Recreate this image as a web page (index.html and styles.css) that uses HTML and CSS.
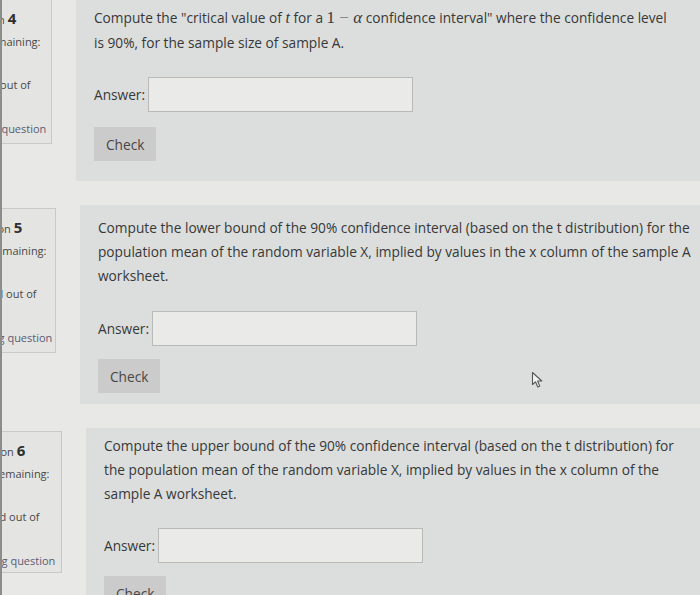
FILE: index.html
```html
<!DOCTYPE html>
<html>
<head>
<meta charset="utf-8">
<title>Quiz</title>
<link rel="stylesheet" href="styles.css">
</head>
<body>
<div class="page">
  <div class="que q4">
    <div class="info">
      <div class="qno">Question <b>4</b></div>
      <div class="line">Tries remaining:</div>
      <div class="line">2</div>
      <div class="line">Marked out of</div>
      <div class="line">1.00</div>
      <div class="line flag"><svg class="flagicon" width="16" height="16" viewBox="0 0 16 16"><path d="M3 2v12M3 2h9l-2 3 2 3H3" fill="none" stroke="#777" stroke-width="1.4"/></svg>Flag question</div>
    </div>
    <div class="content">
      <p class="qtext">Compute the "critical value of <i class="mv">t</i> for a <span class="math">1 <span class="minus">−</span> <i>α</i></span> confidence interval" where the confidence level<br>is 90%, for the sample size of sample A.</p>
      <div class="ans"><span class="label">Answer:</span><span class="input"></span></div>
      <button class="check">Check</button>
    </div>
  </div>

  <div class="que q5">
    <div class="info">
      <div class="qno">Question <b>5</b></div>
      <div class="line">Tries remaining:</div>
      <div class="line">2</div>
      <div class="line">Marked out of</div>
      <div class="line">1.00</div>
      <div class="line flag"><svg class="flagicon" width="16" height="16" viewBox="0 0 16 16"><path d="M3 2v12M3 2h9l-2 3 2 3H3" fill="none" stroke="#777" stroke-width="1.4"/></svg>Flag question</div>
    </div>
    <div class="content">
      <p class="qtext">Compute the lower bound of the 90% confidence interval (based on the t distribution) for the<br>population mean of the random variable X, implied by values in the x column of the sample A<br>worksheet.</p>
      <div class="ans"><span class="label">Answer:</span><span class="input"></span></div>
      <button class="check">Check</button>
    </div>
  </div>

  <div class="que q6">
    <div class="info">
      <div class="qno">Question <b>6</b></div>
      <div class="line">Tries remaining:</div>
      <div class="line">2</div>
      <div class="line">Marked out of</div>
      <div class="line">1.00</div>
      <div class="line flag"><svg class="flagicon" width="16" height="16" viewBox="0 0 16 16"><path d="M3 2v12M3 2h9l-2 3 2 3H3" fill="none" stroke="#777" stroke-width="1.4"/></svg>Flag question</div>
    </div>
    <div class="content">
      <p class="qtext">Compute the upper bound of the 90% confidence interval (based on the t distribution) for<br>the population mean of the random variable X, implied by values in the x column of the<br>sample A worksheet.</p>
      <div class="ans"><span class="label">Answer:</span><span class="input"></span></div>
      <button class="check">Check</button>
    </div>
  </div>
</div>
<svg class="cursor" width="14" height="18" viewBox="0 0 14 18"><path d="M1.5 1.5 L1.5 13.5 L4.5 10.8 L6.8 16 L8.8 15.1 L6.6 10 L10.8 10 Z" fill="#f2f2f0" stroke="#555" stroke-width="1.1" stroke-linejoin="round"/></svg>
</body>
</html>
```
FILE: styles.css
```css
html, body {
  margin: 0;
  padding: 0;
}
body {
  width: 700px;
  height: 595px;
  overflow: hidden;
  background: #e8e9e7;
  font-family: "Open Sans", "Noto Sans", sans-serif;
  color: #383838;
  position: relative;
  border-left: 2px solid #8c8c8a;
  box-sizing: border-box;
}
.page {
  margin-top: -4px;
  display: flex;
  flex-direction: column;
  gap: 24px;
}
.que {
  display: flex;
  align-items: flex-start;
  gap: 24px;
  margin-left: -70px;
}
.q5 { margin-left: -66px; }
.q6 { margin-left: -60px; }
.info {
  flex: none;
  width: 120px;
  height: 145px;
  box-sizing: border-box;
  margin-top: 3px;
  padding: 8px 4px 0 25px;
  background: #e4e5e3;
  border: 1px solid #c9cac8;
  font-size: 11px;
  line-height: 21.7px;
  color: #474747;
  white-space: nowrap;
  overflow: hidden;
}
.q5 .info {
  padding-left: 27px;
}
.q6 .info {
  height: 142px;
  padding-left: 24px;
}
.qno b {
  font-size: 15px;
  font-weight: 700;
  color: #303030;
}
.flag {
  color: #5b5b72;
}
.flagicon {
  vertical-align: -3px;
  margin-right: 4px;
}
.content {
  flex: 1;
  background: #dbdedd;
  padding: 9px 0 14px 18px;
}
.q4 .content {
  padding-bottom: 20px;
}
.q4 .check {
  margin-top: 15px;
}
.q5 .content {
  padding-top: 11px;
  padding-bottom: 11px;
}
.q5 .ans {
  margin-top: 23px;
}
.q6 .content {
  padding-top: 6px;
}
.qtext {
  margin: 0;
  font-size: 13.7px;
  line-height: 24px;
  white-space: nowrap;
}
.q4 .qtext {
  line-height: 25px;
}
.mv {
  font-family: "Liberation Serif", serif;
  font-size: 16px;
}
.math {
  font-family: "Liberation Serif", serif;
  font-size: 17px;
}
.minus {
  color: #777;
}
.ans {
  display: flex;
  align-items: center;
  margin-top: 22px;
  gap: 3px;
}
.label {
  font-size: 13.7px;
}
.input {
  display: block;
  width: 263px;
  height: 33px;
  background: #eaeae8;
  border: 1px solid #b9bab8;
}
.check {
  display: block;
  margin-top: 13px;
  height: 34px;
  padding: 0 12px;
  border: none;
  background: #cacbca;
  color: #474747;
  font-family: "Open Sans", "Noto Sans", sans-serif;
  font-size: 13.7px;
}
.cursor {
  position: absolute;
  left: 529px;
  top: 371px;
}
```
